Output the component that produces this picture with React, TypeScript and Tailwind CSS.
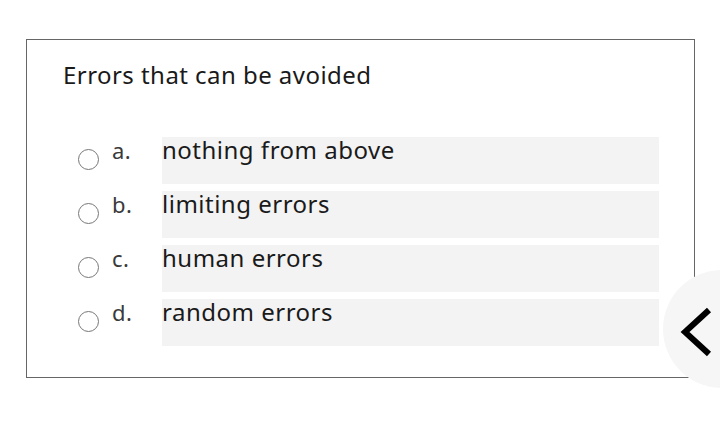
const options = [
  { letter: 'a.', text: 'nothing from above' },
  { letter: 'b.', text: 'limiting errors' },
  { letter: 'c.', text: 'human errors' },
  { letter: 'd.', text: 'random errors' },
];

export default function App() {
  return (
    <div
      className="relative w-[720px] h-[424px] overflow-hidden bg-white text-[#1a1a1a]"
      style={{ fontFamily: '"Noto Sans", "Open Sans", sans-serif' }}
    >
      <div className="ml-[26px] mt-[39px] w-[669px] h-[339px] border-[1.5px] border-[#666] pl-[36px] pr-[35px] pt-[17px]">
        <h1 className="text-[24px] leading-[36px] font-normal tracking-[0.45px]">Errors that can be avoided</h1>

        <div className="mt-[44px] flex flex-col gap-[7px]">
          {options.map((o) => (
            <div key={o.letter} className="flex h-[47px]">
              <div className="w-[49px] pl-[15px] pt-[12px]">
                <span className="block w-[21px] h-[21px] rounded-full border-[1.5px] border-[#777] bg-white" />
              </div>
              <span className="w-[50px] text-[22px] leading-[26px] text-[#3a3a3a] tracking-[0.4px]">{o.letter}</span>
              <div className="flex-1 bg-[#f3f3f3] text-[24px] leading-[26px] tracking-[0.5px]">{o.text}</div>
            </div>
          ))}
        </div>
      </div>

      {/* floating back button */}
      <button className="absolute left-[663px] top-[270px] w-[118px] h-[118px] rounded-full bg-[#f6f6f6]">
        <svg width="118" height="118" viewBox="0 0 118 118" className="block">
          <polyline points="46,40 22,62 46,84" fill="none" stroke="#000" strokeWidth="6" strokeLinejoin="miter" />
        </svg>
      </button>
    </div>
  );
}
